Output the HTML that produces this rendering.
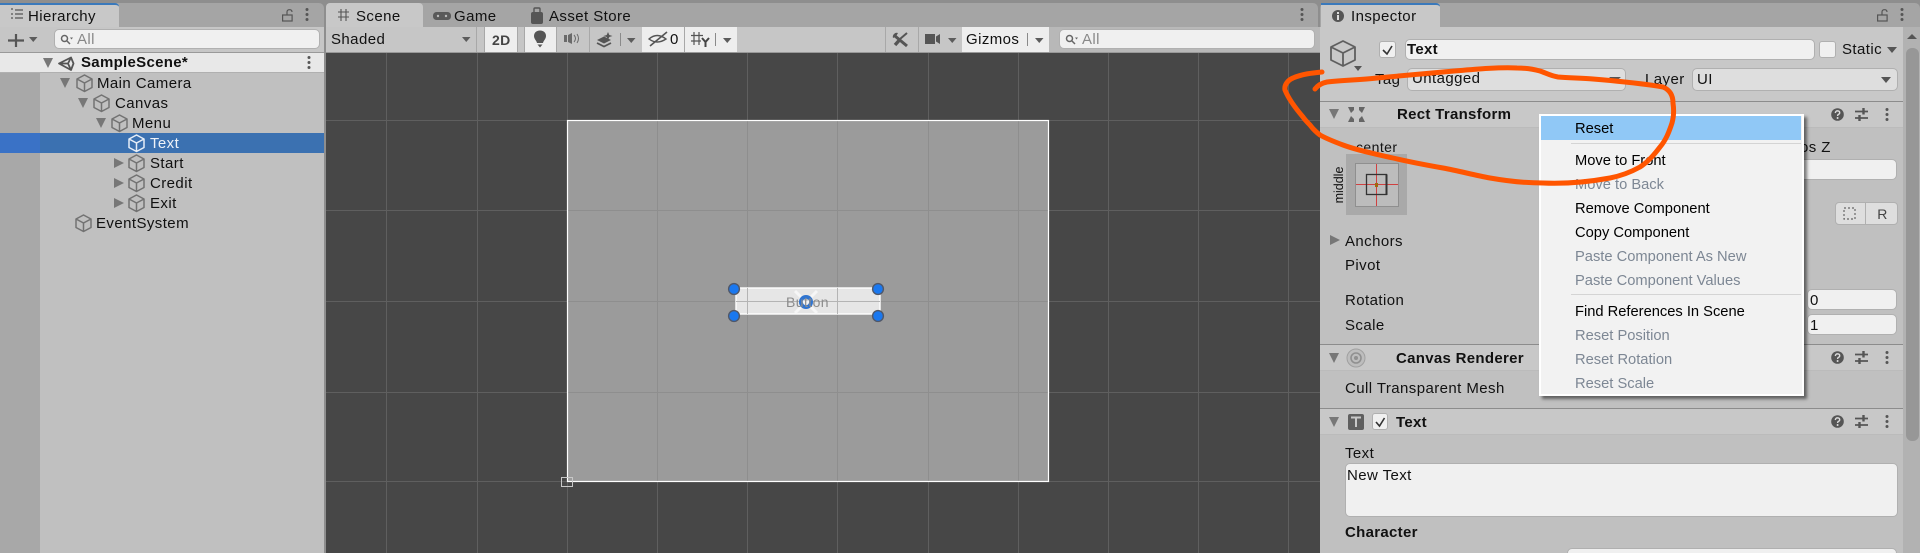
<!DOCTYPE html>
<html><head><meta charset="utf-8"><title>Unity Editor</title>
<style>
html,body{margin:0;padding:0;background:#8e8e8e;}
#r{position:relative;width:1920px;height:553px;overflow:hidden;background:#8e8e8e;font-family:"Liberation Sans",sans-serif;color:#101010;}
#r div{position:absolute;box-sizing:border-box;}
.t{position:absolute;white-space:nowrap;line-height:20px;height:20px;margin-top:1px;font-size:15px;letter-spacing:.42px;color:#111;}
.b{font-weight:bold;letter-spacing:.3px;}
.f{background:#f0f0f0;border:1px solid #b0b0b0;border-radius:5px;}
.bt{background:#eee;}
.s{background:#a8a8a8;}
.m{position:absolute;left:1575px;white-space:nowrap;line-height:20px;height:20px;margin-top:1px;font-size:14.7px;color:#000;}
.g{color:#7d8794;}
svg{position:absolute;left:0;top:0;}
</style></head><body><div id="r">

<!-- panel bases -->
<div style="left:0;top:3px;width:324px;height:24px;background:#a5a5a5;border-radius:5px 5px 0 0;"></div>
<div style="left:326px;top:3px;width:992px;height:24px;background:#a5a5a5;border-radius:5px 5px 0 0;"></div>
<div style="left:1320px;top:3px;width:600px;height:24px;background:#a5a5a5;border-radius:5px 5px 0 0;"></div>

<div style="left:0;top:27px;width:324px;height:26px;background:#c6c6c6;border-bottom:1px solid #999;"></div>
<div style="left:0;top:53px;width:324px;height:500px;background:#c0c0c0;"></div>
<div style="left:0;top:73px;width:40px;height:480px;background:#a8a8a8;"></div>
<div style="left:0;top:53px;width:324px;height:20px;background:#e8e8e8;border-bottom:1px solid #b0b0b0;"></div>
<div style="left:0;top:133px;width:40px;height:20px;background:#3a72c6;"></div>
<div style="left:40px;top:133px;width:284px;height:20px;background:#3b71b1;"></div>

<!-- tabs -->
<div style="left:0;top:3px;width:119px;height:24px;background:#c8c8c8;border-top:2px solid #3a79bb;border-radius:0 4px 0 0;"></div>
<div style="left:326px;top:3px;width:97px;height:24px;background:#c8c8c8;border-radius:4px 4px 0 0;"></div>
<div style="left:1321px;top:3px;width:119px;height:24px;background:#c8c8c8;border-top:2px solid #3a79bb;border-radius:0 4px 0 0;"></div>

<!-- scene toolbar -->
<div style="left:326px;top:27px;width:994px;height:26px;background:#c6c6c6;border-bottom:1px solid #999;"></div>
<div class="s" style="left:476px;top:27px;width:1px;height:25px;"></div>
<div class="bt" style="left:485px;top:27px;width:32px;height:25px;"></div>
<div class="s" style="left:484px;top:27px;width:1px;height:25px;"></div>
<div class="s" style="left:517px;top:27px;width:1px;height:25px;"></div>
<div class="s" style="left:524px;top:27px;width:1px;height:25px;"></div>
<div class="bt" style="left:525px;top:27px;width:31px;height:25px;"></div>
<div class="s" style="left:556px;top:27px;width:1px;height:25px;"></div>
<div class="s" style="left:589px;top:27px;width:1px;height:25px;"></div>
<div class="bt" style="left:642px;top:27px;width:42px;height:25px;"></div>
<div class="s" style="left:684px;top:27px;width:1px;height:25px;"></div>
<div class="bt" style="left:685px;top:27px;width:52px;height:25px;"></div>
<div class="s" style="left:885px;top:27px;width:1px;height:25px;"></div>
<div class="s" style="left:918px;top:27px;width:1px;height:25px;"></div>
<div class="bt" style="left:962px;top:27px;width:87px;height:25px;"></div>
<div style="left:1049px;top:27px;width:271px;height:25px;background:#b8b8b8;"></div>
<div class="f" style="left:54px;top:29px;width:266px;height:20px;"></div>
<div class="f" style="left:1059px;top:29px;width:256px;height:20px;"></div>

<!-- scene view -->
<div style="left:326px;top:53px;width:994px;height:500px;background:#474747;"></div>

<!-- inspector base -->
<div style="left:1320px;top:27px;width:600px;height:526px;background:#c0c0c0;"></div>
<div style="left:1320px;top:27px;width:583px;height:74px;background:#c8c8c8;"></div>
<div style="left:1320px;top:101px;width:583px;height:1px;background:#8c8c8c;"></div>
<div style="left:1320px;top:102px;width:583px;height:26px;background:#c8c8c8;border-bottom:1px solid #bbb;"></div>
<div style="left:1320px;top:344px;width:583px;height:1px;background:#8c8c8c;"></div>
<div style="left:1320px;top:345px;width:583px;height:26px;background:#c8c8c8;border-bottom:1px solid #bbb;"></div>
<div style="left:1320px;top:408px;width:583px;height:1px;background:#8c8c8c;"></div>
<div style="left:1320px;top:409px;width:583px;height:26px;background:#c8c8c8;border-bottom:1px solid #bbb;"></div>
<div style="left:1903px;top:27px;width:17px;height:526px;background:#b2b2b2;"></div>
<div style="left:1906px;top:48px;width:13px;height:393px;background:#979797;border-radius:6px;"></div>

<!-- inspector fields -->
<div class="f" style="left:1379px;top:41px;width:17px;height:17px;border-radius:3px;"></div>
<div class="f" style="left:1405px;top:39px;width:410px;height:21px;"></div>
<div class="f" style="left:1819px;top:41px;width:17px;height:17px;border-radius:3px;"></div>
<div class="f" style="left:1407px;top:68px;width:219px;height:23px;background:#dedede;"></div>
<div class="f" style="left:1692px;top:68px;width:206px;height:23px;background:#dedede;"></div>
<div class="f" style="left:1786px;top:159px;width:111px;height:21px;"></div>
<div class="f" style="left:1835px;top:202px;width:31px;height:23px;background:#dedede;border-radius:4px 0 0 4px;"></div>
<div class="f" style="left:1865px;top:202px;width:33px;height:23px;background:#dedede;border-radius:0 4px 4px 0;"></div>
<div class="f" style="left:1807px;top:289px;width:90px;height:21px;"></div>
<div class="f" style="left:1807px;top:314px;width:90px;height:21px;"></div>
<div class="f" style="left:1372px;top:413px;width:16px;height:17px;border-radius:3px;"></div>
<div class="f" style="left:1345px;top:463px;width:553px;height:54px;"></div>
<div class="f" style="left:1567px;top:548px;width:330px;height:21px;"></div>
<div style="left:1346px;top:154px;width:61px;height:61px;background:#a9a9a9;"></div>
<div style="left:1355px;top:163px;width:44px;height:44px;background:#bcbcbc;border:1px solid #8f8f8f;"></div>

<!-- icons & scene graphics -->
<svg width="1920" height="553" viewBox="0 0 1920 553" xmlns="http://www.w3.org/2000/svg">
<defs>
<g id="cube" fill="none" stroke="#727272" stroke-width="1.5" stroke-linejoin="round">
<path d="M8.5 1 L16 5 V13.5 L8.5 17.5 L1 13.5 V5 Z M1 5 L8.5 9 L16 5 M8.5 9 V17.5"/>
</g>
<g id="cubew" fill="none" stroke="#e6eef8" stroke-width="1.5" stroke-linejoin="round">
<path d="M8.5 1 L16 5 V13.5 L8.5 17.5 L1 13.5 V5 Z M1 5 L8.5 9 L16 5 M8.5 9 V17.5"/>
</g>
<path id="td" d="M0 0 H10 L5 10 Z" fill="#777"/>
<path id="tr" d="M0 0 L10 5 L0 10 Z" fill="#777"/>
<path id="ar" d="M0 0 H8.5 L4.25 5 Z" fill="#5c5c5c"/>
<g id="dots" fill="#555"><circle cx="2" cy="2.5" r="1.5"/><circle cx="2" cy="7.5" r="1.5"/><circle cx="2" cy="12.5" r="1.5"/></g>
<g id="lock" fill="none" stroke="#555" stroke-width="1.2"><rect x="0.6" y="6" width="9.5" height="6"/><path d="M5 6 V3 Q5 .7 7.5 .7 Q10 .7 10 3"/></g>
<g id="mag" fill="none" stroke="#666" stroke-width="1.5"><circle cx="4.5" cy="4.5" r="3"/><path d="M7 7 L10 10"/><path d="M10 3.5 H13 L11.5 5.5 Z" fill="#666" stroke="none"/></g>
<g id="help"><circle cx="6.5" cy="6.5" r="6.3" fill="#555"/><path d="M4.3 5 Q4.6 2.8 6.6 2.8 Q8.7 2.9 8.7 4.7 Q8.7 5.8 7.4 6.4 Q6.6 6.8 6.6 8" fill="none" stroke="#ddd" stroke-width="1.4"/><circle cx="6.6" cy="10" r="1" fill="#ddd"/></g>
<g id="sl" stroke="#555" stroke-width="1.8" fill="none"><path d="M0 3.5 H13 M0 10 H13"/><path d="M8.5 0 V6.5 M4.5 7 V13" stroke-width="2.4"/></g>
</defs>

<!-- hierarchy tab icon -->
<path d="M11 9 H13 M11 14 H13 M11 18 H13 M15 10 H23 M15 14 H23 M15 18 H23" stroke="#555" stroke-width="1.2" fill="none"/>
<use href="#lock" x="282" y="9"/><use href="#dots" x="305" y="7"/>
<!-- + -->
<path d="M16 34 V47 M8 40.5 H24" stroke="#555" stroke-width="2.2"/>
<use href="#ar" x="29" y="37"/>
<use href="#mag" x="60" y="34"/>
<use href="#mag" x="1065" y="34"/>

<!-- hierarchy tree -->
<use href="#td" x="43" y="58"/>
<g fill="none" stroke="#555" stroke-width="1.8" stroke-linejoin="round"><path d="M59 63.5 L71 57.5 L73.5 63.5 L71 70 Z M59 63.5 H68 M71 57.5 L68 63.5 L71 70"/></g>
<use href="#dots" x="307" y="55"/>
<use href="#td" x="60" y="78"/><use href="#cube" x="76" y="74"/>
<use href="#td" x="78" y="98"/><use href="#cube" x="93" y="94"/>
<use href="#td" x="96" y="118"/><use href="#cube" x="111" y="114"/>
<use href="#cubew" x="128" y="134"/>
<use href="#tr" x="114" y="158"/><use href="#cube" x="128" y="154"/>
<use href="#tr" x="114" y="178"/><use href="#cube" x="128" y="174"/>
<use href="#tr" x="114" y="198"/><use href="#cube" x="128" y="194"/>
<use href="#cube" x="75" y="214"/>

<!-- scene tabs -->
<path d="M341 9 V21 M346 9 V21 M338 12 H349 M338 17 H349" stroke="#555" stroke-width="1.1" fill="none"/>
<rect x="433" y="12" width="18" height="8" rx="3.5" fill="#5a5a5a"/><circle cx="438" cy="16" r="1.2" fill="#bbb"/><circle cx="446" cy="16" r="1.2" fill="#bbb"/>
<rect x="531" y="12" width="12" height="12" rx="2" fill="#555"/><path d="M534 12 V9 Q534 8 535 8 H539 Q540 8 540 9 V12" stroke="#555" fill="none" stroke-width="1.4"/>
<use href="#dots" x="1300" y="7"/>

<!-- scene toolbar icons -->
<use href="#ar" x="462" y="37"/>
<!-- bulb -->
<path d="M540 30.5 C544 30.5 546 33 546 36 C546 39 543.5 40.5 543 43 H537 C536.5 40.5 534 39 534 36 C534 33 536 30.5 540 30.5 Z" fill="#555"/>
<path d="M537.5 44.5 H542.5 L540 47.5 Z" fill="#555"/>
<!-- audio -->
<path d="M564 35 H567 V42 H564 Z M568 35 L572 33 V44 L568 42 Z" fill="#6a6a6a"/><path d="M574 35 Q577 38.5 574 42 M577 34 Q580 38.5 577 43" stroke="#6a6a6a" fill="none" stroke-width="1"/>
<!-- fx -->
<path d="M597 40 L604 36.5 L611 40 L604 43.5 Z" fill="#555"/><path d="M597 43 L604 46.5 L611 43" stroke="#555" fill="none" stroke-width="1.8"/><path d="M608 32 L609.3 35 L612.5 36 L609.3 37 L608 40 L606.7 37 L603.5 36 L606.7 35 Z" fill="#555"/>
<path d="M620.5 33 V46" stroke="#8a8a8a"/><use href="#ar" x="627" y="38"/>
<!-- eye -->
<path d="M649 39 Q657 32 666 39 Q657 45 649 39 Z" stroke="#555" fill="none" stroke-width="1.4"/><path d="M650 46 L667 32" stroke="#555" stroke-width="1.6"/>
<!-- grid -->
<path d="M694 32 V45 M699 32 V45 M691 35.5 H703 M691 41 H701" stroke="#555" stroke-width="1.2" fill="none"/>
<path d="M702 38 L705.5 42 L709 38 M705.5 42 V47" stroke="#444" stroke-width="2" fill="none"/>
<path d="M715.5 33 V46" stroke="#8a8a8a"/><use href="#ar" x="723" y="38"/>
<!-- tools -->
<path d="M895 36 L907 46" stroke="#555" stroke-width="3"/><path d="M898 33 A4 4 0 0 0 893 38 L896 36.5 Z" fill="#555"/><path d="M907 33 L900 39" stroke="#555" stroke-width="2"/><path d="M899.5 40 L895 45" stroke="#555" stroke-width="3.4"/>
<rect x="925" y="34" width="10" height="10" fill="#555"/><path d="M936 36.5 L940 34 V44 L936 41.5 Z" fill="#555"/>
<use href="#ar" x="948" y="38"/>
<path d="M1027.5 33 V46" stroke="#8a8a8a"/><use href="#ar" x="1035" y="38"/>

<!-- scene grid -->
<g stroke="#5f5f5f" stroke-width="1">
<path d="M386.5 53 V553 M477.5 53 V553 M567.5 53 V553 M657.5 53 V553 M747.5 53 V553 M837.5 53 V553 M928.5 53 V553 M1018.5 53 V553 M1108.5 53 V553 M1198.5 53 V553 M1288.5 53 V553"/>
<path d="M326 120.5 H1320 M326 210.5 H1320 M326 301.5 H1320 M326 392.5 H1320 M326 481.5 H1320"/>
</g>
<!-- canvas rect -->
<rect x="568" y="121" width="480" height="360" fill="#9b9b9b"/>
<g stroke="#8e8e8e" stroke-width="1" fill="none">
<path d="M657.5 121 V481 M747.5 121 V481 M837.5 121 V481 M928.5 121 V481 M1018.5 121 V481 M568 210.5 H1048 M568 301.5 H1048 M568 392.5 H1048"/>
</g>
<rect x="567.5" y="120.5" width="481" height="361" fill="none" stroke="#fff" stroke-width="1.2"/>
<rect x="561.5" y="477.5" width="11" height="9" fill="none" stroke="#c8c8c8" stroke-width="1"/>
<!-- button -->
<rect x="736" y="288" width="144" height="26" fill="#e6e6e6" stroke="#fff" stroke-width="1.4"/>
<path d="M747.5 288 V314 M837.5 288 V314 M736 301.5 H880" stroke="#b4b4b4" stroke-width="1"/>
<g fill="#1a78f0" stroke="#50586a" stroke-width="1.4">
<circle cx="734" cy="289" r="5.4"/><circle cx="878" cy="289" r="5.4"/><circle cx="734" cy="316" r="5.4"/><circle cx="878" cy="316" r="5.4"/>
</g>
<g stroke="#f6f6f6" stroke-width="3" fill="none"><path d="M795 291 L802 298 M817 291 L810 298 M795 313 L802 306 M817 313 L810 306"/></g>
<circle cx="806" cy="302" r="7" fill="#2f74d0"/><circle cx="806" cy="302" r="3.2" fill="#f4f4f4"/>

<!-- inspector tab icons -->
<circle cx="1338" cy="16" r="6" fill="#555"/><rect x="1337" y="15" width="2" height="5" fill="#ddd"/><rect x="1337" y="12" width="2" height="2" fill="#ddd"/>
<use href="#lock" x="1877" y="9"/><use href="#dots" x="1900" y="7"/>

<!-- inspector icons -->
<g fill="none" stroke="#5f5f5f" stroke-width="1.8" stroke-linejoin="round"><path d="M1343 41 L1355 47 V60 L1343 66 L1331 60 V47 Z M1331 47 L1343 53 L1355 47 M1343 53 V66"/></g>
<path d="M1354 66 H1362 L1358 71 Z" fill="#555"/>
<path d="M1383 50 L1387 54 L1392 46" stroke="#333" stroke-width="1.6" fill="none"/>
<path d="M1887 47 H1897 L1892 53 Z" fill="#555"/>
<path d="M1609 77 H1621 L1615 82 Z" fill="#555"/><path d="M1881 77 H1891 L1886 83 Z" fill="#555"/>
<path d="M1907 39 L1912 34 L1917 39 Z" fill="#555"/>
<!-- rect transform header -->
<use href="#td" x="1329" y="109"/>
<g fill="#666"><path d="M1348 107 L1354 107 L1354 110 L1351 113 Z M1365 107 L1359 107 L1359 110 L1362 113 Z M1348 122 L1354 122 L1354 119 L1351 116 Z M1365 122 L1359 122 L1359 119 L1362 116 Z"/></g>
<use href="#help" x="1831" y="108"/><use href="#sl" x="1855" y="108"/><use href="#dots" x="1885" y="107"/>
<!-- anchor -->
<path d="M1376.5 164 V206 M1356 184.5 H1398" stroke="#d04040" stroke-width="1"/>
<rect x="1366.5" y="174.5" width="20" height="20" fill="none" stroke="#333" stroke-width="1.3"/>
<path d="M1386.5 174.5 V195" stroke="#333" stroke-width="2"/>
<rect x="1375" y="183" width="3" height="4" fill="#a06a10"/>
<rect x="1844" y="208" width="11" height="11" fill="none" stroke="#666" stroke-dasharray="2 2" stroke-width="1.2"/>
<use href="#tr" x="1330" y="235"/>
<!-- canvas renderer header -->
<use href="#td" x="1329" y="353"/>
<circle cx="1356" cy="358" r="9" fill="#bdbdbd" stroke="#a0a0a0"/><circle cx="1356" cy="358" r="5" fill="none" stroke="#909090" stroke-width="1.6"/><circle cx="1356" cy="358" r="2" fill="#909090"/>
<use href="#help" x="1831" y="351"/><use href="#sl" x="1855" y="351"/><use href="#dots" x="1885" y="350"/>
<!-- text header -->
<use href="#td" x="1329" y="417"/>
<rect x="1348" y="414" width="16" height="16" rx="2" fill="#5f5f5f"/><path d="M1352 418.5 V417.5 H1360 V418.5 M1356 417.5 V427" stroke="#c8c8c8" stroke-width="2" fill="none"/>
<path d="M1376 422 L1379.5 426 L1384.5 418" stroke="#333" stroke-width="1.6" fill="none"/>
<use href="#help" x="1831" y="415"/><use href="#sl" x="1855" y="415"/><use href="#dots" x="1885" y="414"/>
</svg>

<!-- hierarchy text -->
<span class="t" style="left:28px;top:6px;">Hierarchy</span>
<span class="t" style="left:77px;top:29px;color:#888;">All</span>
<span class="t b" style="left:81px;top:52px;">SampleScene*</span>
<span class="t" style="left:97px;top:73px;">Main Camera</span>
<span class="t" style="left:115px;top:93px;">Canvas</span>
<span class="t" style="left:132px;top:113px;">Menu</span>
<span class="t" style="left:150px;top:133px;color:#eef2f8;">Text</span>
<span class="t" style="left:150px;top:153px;">Start</span>
<span class="t" style="left:150px;top:173px;">Credit</span>
<span class="t" style="left:150px;top:193px;">Exit</span>
<span class="t" style="left:96px;top:213px;">EventSystem</span>

<!-- scene text -->
<span class="t" style="left:356px;top:6px;">Scene</span>
<span class="t" style="left:454px;top:6px;">Game</span>
<span class="t" style="left:549px;top:6px;">Asset Store</span>
<span class="t" style="left:331px;top:29px;">Shaded</span>
<span class="t b" style="left:492px;top:29px;font-size:14px;color:#444;">2D</span>
<span class="t" style="left:670px;top:29px;">0</span>
<span class="t" style="left:966px;top:29px;">Gizmos</span>
<span class="t" style="left:1082px;top:29px;color:#888;">All</span>
<span class="t" style="left:786px;top:291px;color:#8c8c8c;font-size:14px;">Button</span>

<!-- inspector text -->
<span class="t" style="left:1351px;top:6px;">Inspector</span>
<span class="t b" style="left:1407px;top:39px;">Text</span>
<span class="t" style="left:1842px;top:39px;">Static</span>
<span class="t" style="left:1375px;top:69px;">Tag</span>
<span class="t" style="left:1412px;top:68px;">Untagged</span>
<span class="t" style="left:1645px;top:69px;">Layer</span>
<span class="t" style="left:1697px;top:69px;">UI</span>
<span class="t b" style="left:1397px;top:104px;">Rect Transform</span>
<span class="t" style="left:1356px;top:136px;font-size:14px;">center</span>
<span class="t" style="left:1800px;top:137px;">os Z</span>
<span class="t" style="left:1314px;top:174px;font-size:12.5px;letter-spacing:0;transform:rotate(-90deg);width:50px;text-align:center;">middle</span>
<span class="t" style="left:1345px;top:231px;">Anchors</span>
<span class="t" style="left:1345px;top:255px;">Pivot</span>
<span class="t" style="left:1345px;top:290px;">Rotation</span>
<span class="t" style="left:1345px;top:315px;">Scale</span>
<span class="t" style="left:1810px;top:290px;">0</span>
<span class="t" style="left:1810px;top:315px;">1</span>
<span class="t" style="left:1866px;top:203px;width:33px;text-align:center;font-size:14px;color:#444;">R</span>
<span class="t b" style="left:1396px;top:348px;">Canvas Renderer</span>
<span class="t" style="left:1345px;top:378px;">Cull Transparent Mesh</span>
<span class="t b" style="left:1396px;top:412px;">Text</span>
<span class="t" style="left:1345px;top:443px;">Text</span>
<span class="t" style="left:1347px;top:465px;">New Text</span>
<span class="t b" style="left:1345px;top:522px;">Character</span>

<!-- context menu -->
<div style="left:1539px;top:114px;width:265px;height:282px;background:#f2f2f2;border:2px solid #fff;box-shadow:3px 3px 3px rgba(0,0,0,.5);"></div>
<div style="left:1541px;top:116px;width:260px;height:24px;background:#90c8f6;"></div>
<div style="left:1571px;top:143px;width:230px;height:1px;background:#d4d4d4;"></div>
<div style="left:1571px;top:294px;width:230px;height:1px;background:#d4d4d4;"></div>
<span class="m" style="top:118px;">Reset</span>
<span class="m" style="top:150px;">Move to Front</span>
<span class="m g" style="top:174px;">Move to Back</span>
<span class="m" style="top:198px;">Remove Component</span>
<span class="m" style="top:222px;">Copy Component</span>
<span class="m g" style="top:246px;">Paste Component As New</span>
<span class="m g" style="top:270px;">Paste Component Values</span>
<span class="m" style="top:301px;">Find References In Scene</span>
<span class="m g" style="top:325px;">Reset Position</span>
<span class="m g" style="top:349px;">Reset Rotation</span>
<span class="m g" style="top:373px;">Reset Scale</span>

<!-- orange annotation -->
<svg width="1920" height="553" viewBox="0 0 1920 553">
<path d="M1315 89 C1318 85 1322 83 1327 82 C1344 80 1360 80 1377 78 C1398 76 1421 74 1443 72 C1468 70 1495 67 1517 68 C1526 68 1533 69 1540 71 C1546 73 1551 76 1558 77 C1570 78 1582 78 1593 79 C1617 81 1640 83 1663 87 C1670 90 1673 96 1673 103 C1674 110 1674 116 1672 123 C1669 132 1666 140 1660 147 C1654 155 1648 162 1640 167 C1631 172 1620 176 1610 178 C1588 182 1566 184 1543 183 C1525 183 1507 181 1490 178 C1474 175 1459 171 1443 168 C1426 165 1410 162 1393 158 C1376 154 1359 151 1343 145 C1335 142 1327 139 1320 135 C1316 132 1313 129 1310 125 C1307 122 1305 120 1303 117 C1297 110 1289 100 1285 90 C1284 85 1288 80 1293 78 C1302 74 1312 73 1322 72" fill="none" stroke="#ff5500" stroke-width="5" stroke-linecap="round" stroke-linejoin="round"/>
</svg>
</div></body></html>
